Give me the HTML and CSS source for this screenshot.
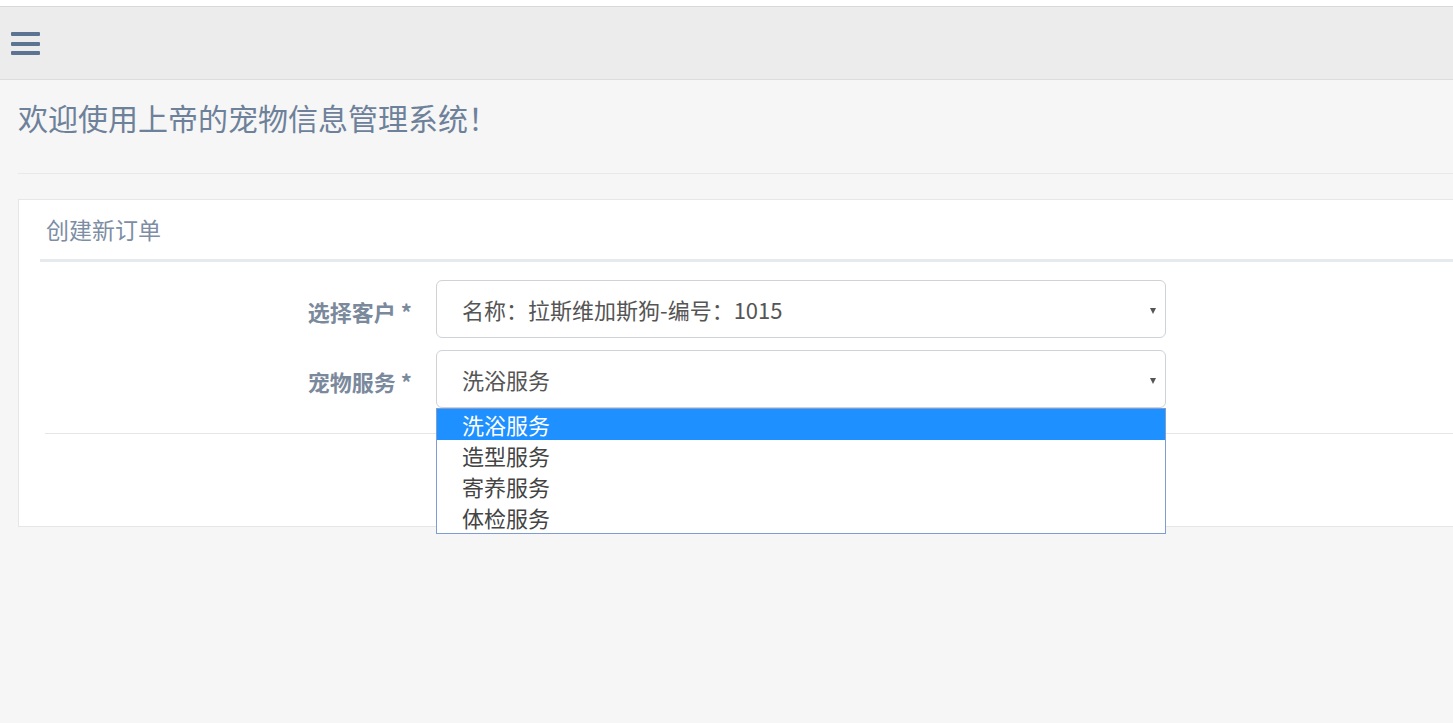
FILE: index.html
```html
<!DOCTYPE html>
<html lang="zh-CN">
<head>
  <meta charset="UTF-8">
  <meta name="viewport" content="width=device-width, initial-scale=1.0">
  <title>宠物信息管理系统</title>
  <link rel="stylesheet" href="styles.css">
</head>
<body>
  <div class="top-strip"></div>
  <div class="header">
    <svg class="menu-toggle" width="30" height="24" viewBox="0 0 30 24">
      <rect x="0" y="0" width="29" height="4" rx="1" fill="#5b7491"/>
      <rect x="0" y="10" width="29" height="4" rx="1" fill="#5b7491"/>
      <rect x="0" y="19" width="29" height="4" rx="1" fill="#5b7491"/>
    </svg>
  </div>

  <div class="main">
    <h1 class="page-title">欢迎使用上帝的宠物信息管理系统！</h1>
    <hr class="divider">

    <div class="panel">
      <div class="panel-heading">创建新订单</div>
      <div class="panel-body">
        <div class="form-row">
          <label class="form-label">选择客户 *</label>
          <div class="select-box">
            <span>名称：拉斯维加斯狗-编号：1015</span>
            <i class="caret"></i>
          </div>
        </div>
        <div class="form-row">
          <label class="form-label">宠物服务 *</label>
          <div class="select-box">
            <span>洗浴服务</span>
            <i class="caret"></i>
            <ul class="dropdown">
              <li class="active">洗浴服务</li>
              <li>造型服务</li>
              <li>寄养服务</li>
              <li>体检服务</li>
            </ul>
          </div>
        </div>
        <div class="form-actions"></div>
      </div>
    </div>
  </div>
</body>
</html>
```

FILE: styles.css
```css
html, body {
  margin: 0;
  padding: 0;
}
body {
  font-family: "Noto Sans CJK SC", "Liberation Sans", sans-serif;
  background: #f6f6f6;
  min-height: 100vh;
}
.top-strip {
  height: 6px;
  background: #ffffff;
}
.header {
  height: 72px;
  background: #ececec;
  border-top: 1px solid #d9d9d9;
  border-bottom: 1px solid #dcdcdc;
  display: flex;
  align-items: center;
  padding-left: 11px;
}
.menu-toggle {
  display: block;
  margin-top: 1px;
}
.main {
  padding-left: 18px;
}
.page-title {
  margin: 19px 0 0;
  font-size: 30px;
  line-height: 36px;
  font-weight: normal;
  color: #6e819a;
}
.divider {
  margin: 38px 0 0;
  border: 0;
  border-top: 1px solid #e9e9e9;
}
.panel {
  margin-top: 25px;
  background: #ffffff;
  border: 1px solid #e6e6e6;
  border-right: 0;
  height: 326px;
}
.panel-heading {
  margin-left: 21px;
  padding: 14px 6px 15px;
  line-height: 30px;
  font-size: 23px;
  color: #7d8ea4;
  border-bottom: 3px solid #e6e9ee;
}
.panel-body {
  padding-top: 18px;
}
.form-row {
  display: flex;
  align-items: center;
  margin-bottom: 12px;
}
.form-label {
  width: 393px;
  text-align: right;
  font-size: 22px;
  font-weight: bold;
  color: #7a899b;
  padding-top: 3px;
}
.select-box {
  position: relative;
  margin-left: 24px;
  width: 730px;
  height: 58px;
  box-sizing: border-box;
  border: 1px solid #cfd2d6;
  border-radius: 6px;
  background: #ffffff;
  display: flex;
  align-items: center;
  padding-left: 25px;
  font-size: 22px;
  color: #555555;
}
.caret {
  position: absolute;
  right: 9px;
  top: 27px;
  width: 0;
  height: 0;
  border-left: 3.5px solid transparent;
  border-right: 3.5px solid transparent;
  border-top: 6px solid #555555;
}
.dropdown {
  position: absolute;
  left: -1px;
  top: 57px;
  width: 728px;
  margin: 0;
  padding: 0;
  list-style: none;
  background: #ffffff;
  border: 1px solid #7f9cd3;
  z-index: 10;
}
.dropdown li {
  height: 31px;
  line-height: 31px;
  padding-left: 25px;
  font-size: 22px;
  color: #444444;
}
.dropdown li.active {
  background: #1e90ff;
  color: #ffffff;
}
.form-actions {
  margin-top: 25px;
  margin-left: 26px;
  border-top: 1px solid #e6e6e6;
}
```
